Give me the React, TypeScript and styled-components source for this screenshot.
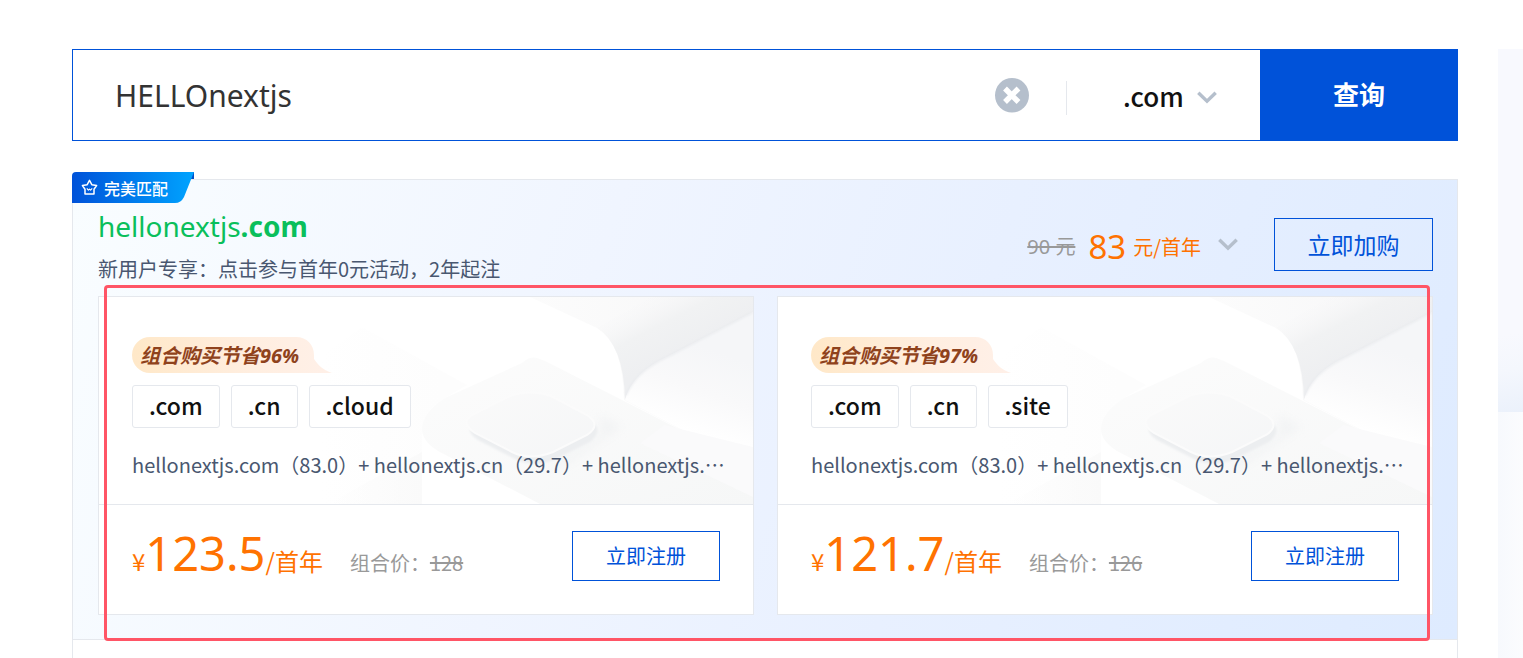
import React, { useState } from "react";
import styled, { createGlobalStyle } from "styled-components";

const latin = `"Noto Sans", "Noto Sans CJK SC", sans-serif`;
const cjk = `"Noto Sans CJK SC", "Noto Sans", sans-serif`;

const blue = "#0052d9";
const orange = "#ff7200";
const line = "#e5e8ed";

const GlobalStyle = createGlobalStyle`
  *, *::before, *::after { box-sizing: border-box; }
  body { margin: 0; background: #fff; color: #333; font-family: ${cjk}; overflow: hidden; }
  button, input, select { font: inherit; color: inherit; margin: 0; padding: 0; border: 0; background: none; border-radius: 0; outline: none; }
  button { cursor: pointer; }
`;

const Page = styled.div`
  display: flex;
  gap: 40px;
  padding: 49px 0 0 72px;
  height: 100vh;
`;

const Main = styled.main`
  flex: 1;
  min-width: 0;
  display: flex;
  flex-direction: column;
  gap: 38px;
`;

const Aside = styled.aside`
  flex: 0 0 25px;
  display: flex;
  flex-direction: column;
`;

const Promo = styled.div`
  flex: 0 0 363px;
  background: linear-gradient(170deg, #f8f9fe 0 78%, #f4f7fd 88%, #ebf1fb 100%);
`;

const SideList = styled.div`
  flex: 1;
  background: linear-gradient(90deg, #f7f9fd, #fbfcfe);
`;

const SearchForm = styled.form`
  display: flex;
  height: 92px;
`;

const SearchField = styled.div`
  flex: 1;
  display: flex;
  align-items: center;
  border: 1px solid ${blue};
  border-right: 0;
  padding-left: 42px;
`;

const SearchInput = styled.input`
  flex: 1;
  min-width: 0;
  height: 60px;
  font-family: ${latin};
  font-size: 30px;
`;

const ClearButton = styled.button`
  display: flex;
  width: 34px;
  height: 35px;
`;

const Suffix = styled.label`
  display: flex;
  align-items: center;
  gap: 14px;
  height: 34px;
  margin: 6px 0 0 37px;
  padding: 0 43px 2px 56px;
  border-left: 1px solid ${line};
`;

const SuffixSelect = styled.select`
  appearance: none;
  width: 60px;
  height: 40px;
  padding-bottom: 10px;
  color: #111;
  font-size: 26px;
  font-weight: 500;
`;

const SearchButton = styled.button`
  flex: 0 0 198px;
  padding-bottom: 4px;
  background: ${blue};
  color: #fff;
  font-size: 26px;
  font-weight: 700;
`;

const Result = styled.section`
  position: relative;
  flex: 1;
  border: 1px solid ${line};
  border-bottom: 0;
`;

const Ribbon = styled.div`
  position: absolute;
  z-index: 1;
  isolation: isolate;
  top: -8px;
  left: -1px;
  display: flex;
  align-items: center;
  gap: 6px;
  width: 122px;
  height: 31px;
  padding-left: 9px;
  color: #fff;
  font-size: 16px;
  font-weight: 500;
  line-height: 30px;
`;

const RibbonShape = styled.svg`
  position: absolute;
  inset: 0;
  z-index: -1;
`;

const Matched = styled.div`
  padding: 24px 24px 24px 25px;
  border-bottom: 1px solid ${line};
  background: linear-gradient(108deg, #f9fdff 0%, #f0f5ff 36%, #e8f0ff 62%, #deebff 100%);
`;

const MatchedHead = styled.div`
  display: flex;
  align-items: center;
  justify-content: space-between;
  height: 92px;
  padding-bottom: 4px;
`;

const Domain = styled.h1`
  margin: 0;
  color: #0abf5b;
  font-family: ${latin};
  font-size: 28px;
  font-weight: 400;
  line-height: 42px;

  b { font-weight: 700; }
`;

const Note = styled.p`
  margin: 0;
  color: #495770;
  font-size: 20px;
  line-height: 44px;
`;

const Actions = styled.div`
  display: flex;
  align-items: center;
  margin-top: -8px;
`;

const Price = styled.div`
  display: flex;
  align-items: center;
  gap: 7px;
  padding-top: 6px;
  color: ${orange};
  font-size: 20px;
  line-height: 46px;
`;

const OldPrice = styled.s`
  margin-right: 6px;
  color: #999;
  font-family: ${latin};
  font-size: 20px;
`;

const Amount = styled.strong<{ $size: number }>`
  font-family: ${latin};
  font-size: ${(p) => p.$size}px;
  font-weight: 400;
`;

const PlainButton = styled.button`
  display: flex;
  margin: 0 36px 0 17px;
`;

const OutlineButton = styled.button<{ $large?: boolean }>`
  width: ${(p) => (p.$large ? 159 : 148)}px;
  height: ${(p) => (p.$large ? 53 : 50)}px;
  border: 1px solid ${blue};
  color: ${blue};
  font-size: ${(p) => (p.$large ? 23 : 20)}px;
`;

const Bundles = styled.div`
  display: grid;
  grid-template-columns: 1fr 1fr;
  gap: 23px;
`;

const Bundle = styled.article`
  min-width: 0;
  border: 1px solid ${line};
  background: #fff;
`;

const BundleTop = styled.div`
  position: relative;
  isolation: isolate;
  height: 208px;
  padding: 40px 0 0 33px;
  border-bottom: 1px solid ${line};
`;

const Backdrop = styled.svg`
  position: absolute;
  z-index: -1;
  top: 0;
  right: 0;
`;

const Saving = styled.div`
  position: relative;
  isolation: isolate;
  width: 200px;
  height: 36px;
  padding-left: 8px;
  color: #8f421c;
  font-family: ${latin};
  font-size: 20px;
  font-style: italic;
  font-weight: 700;
  line-height: 38px;
  white-space: nowrap;

  svg { position: absolute; z-index: -1; inset: 0; }
`;

const Chips = styled.ul`
  display: flex;
  gap: 11px;
  margin: 12px 0 0;
  padding: 0;
  list-style: none;
`;

const Chip = styled.li`
  height: 43px;
  padding: 0 16px;
  border: 1px solid ${line};
  border-radius: 3px;
  background: #fff;
  color: #111;
  font-size: 23px;
  font-weight: 500;
  line-height: 38px;
`;

const Formula = styled.p`
  margin: 21px 0 0;
  color: #495770;
  font-size: 20px;
  line-height: 32px;
  white-space: nowrap;
`;

const BundleFoot = styled.div`
  display: flex;
  align-items: center;
  height: 109px;
  padding: 0 33px 8px;
`;

const BundlePrice = styled.div`
  flex: 1;
  display: flex;
  align-items: baseline;
  padding-top: 4px;
  color: ${orange};
  font-size: 24px;
  line-height: 60px;
`;

const Total = styled.span`
  margin-left: 27px;
  color: #999;
  font-size: 20px;
`;

const Highlight = styled.div`
  position: absolute;
  z-index: 2;
  top: 105px;
  left: 31px;
  right: 27px;
  height: 356px;
  border: 3px solid #ff5566;
  border-radius: 4px;
  pointer-events: none;
`;

const Chevron = () => (
  <svg width="20" height="13" viewBox="0 0 20 13" fill="none" stroke="#b5bfcc" strokeWidth="3.4" aria-hidden="true">
    <path d="M1.3 1.7 10 10.2 18.7 1.7" />
  </svg>
);

const Scene = ({ id }: { id: string }) => (
  <Backdrop width="433" height="207" viewBox="-80 0 433 207" aria-hidden="true">
    <defs>
      <linearGradient id={`${id}-top`} gradientUnits="userSpaceOnUse" x1="130" y1="0" x2="353" y2="0">
        <stop offset="0" stopColor="#fcfcfc" />
        <stop offset="1" stopColor="#f6f6f7" />
      </linearGradient>
      <linearGradient id={`${id}-band`} gradientUnits="userSpaceOnUse" x1="285" y1="52" x2="255" y2="-6">
        <stop offset="0" stopColor="#eeeff1" />
        <stop offset="0.5" stopColor="#f1f2f3" />
        <stop offset="1" stopColor="#f7f7f8" stopOpacity="0" />
      </linearGradient>
      <linearGradient id={`${id}-slope`} gradientUnits="userSpaceOnUse" x1="290" y1="45" x2="262" y2="125">
        <stop offset="0" stopColor="#f5f6f8" />
        <stop offset="0.5" stopColor="#f9f9fa" />
        <stop offset="1" stopColor="#ffffff" />
      </linearGradient>
      <linearGradient id={`${id}-deck`} x1="0" y1="0" x2="1" y2="1">
        <stop offset="0" stopColor="#fcfcfc" />
        <stop offset="1" stopColor="#f6f7f7" />
      </linearGradient>
      <linearGradient id={`${id}-pad`} x1="0" y1="0" x2="1" y2="1">
        <stop offset="0" stopColor="#fafafa" />
        <stop offset="1" stopColor="#f5f6f7" />
      </linearGradient>
      <linearGradient id={`${id}-floor`} gradientUnits="userSpaceOnUse" x1="-70" y1="0" x2="22" y2="0">
        <stop offset="0" stopColor="#fafafa" stopOpacity="0" />
        <stop offset="1" stopColor="#fafafa" />
      </linearGradient>
      <linearGradient id={`${id}-haze`} gradientUnits="userSpaceOnUse" x1="-80" y1="0" x2="40" y2="0">
        <stop offset="0" stopColor="#fdfdfd" stopOpacity="0" />
        <stop offset="1" stopColor="#fdfdfd" />
      </linearGradient>
      <filter id={`${id}-soft`} x="-20%" y="-20%" width="140%" height="140%">
        <feGaussianBlur stdDeviation="5" />
      </filter>
      <filter id={`${id}-edge`} x="-5%" y="-5%" width="110%" height="110%">
        <feGaussianBlur stdDeviation="1" />
      </filter>
    </defs>
    <path d="M-80 60-38 30 67 88 45 101Q22 116 22 132V207H-80Z" fill={`url(#${id}-haze)`} />
    <path d="M130 0 197 31Q223 46 224 103L353 170V0Z" fill={`url(#${id}-top)`} />
    <path d="M197 31 250 0H353V15L267 60Q233 75 225 103Q224 48 197 31Z" fill={`url(#${id}-band)`} />
    <path d="M353 15 267 60Q233 75 225 103L353 170Z" fill={`url(#${id}-slope)`} />
    <path d="M353 15 267 60Q236 74 226 98" fill="none" stroke="#e9ebee" strokeWidth="1.6" filter={`url(#${id}-edge)`} />
    <path d="M137 61Q130 59 122 66L45 101Q22 116 22 132Q22 144 38 154L140 207H353V170L224 104 145 64Z" fill={`url(#${id}-deck)`} />
    <path d="M353 150 264 128 240 146 353 200Z" fill="#fafafb" />
    <path d="M150 168 200 138V118L222 130 160 172Z" fill="#eceef0" opacity="0.5" filter={`url(#${id}-soft)`} />
    <path d="M72 118 110 99Q130 92 151 99L187 118Q202 128 187 140L153 157Q130 166 112 157L75 138Q60 128 72 118Z" fill="#eceef0" transform="translate(3 5)" filter={`url(#${id}-edge)`} />
    <path d="M72 118 110 99Q130 92 151 99L187 118Q202 128 187 138L153 155Q130 164 112 155L75 136Q60 126 72 118Z" fill={`url(#${id}-pad)`} stroke="#fbfbfb" strokeWidth="2" />
    <path d="M-72 207 22 155V207Z" fill={`url(#${id}-floor)`} />
  </Backdrop>
);

type BundleData = { id: string; saving: string; suffixes: string[]; formula: string; price: string; total: string };

const bundles: BundleData[] = [
  {
    id: "cloud",
    saving: "96%",
    suffixes: [".com", ".cn", ".cloud"],
    formula: "hellonextjs.com（83.0）+ hellonextjs.cn（29.7）+ hellonextjs.⋯",
    price: "123.5",
    total: "128",
  },
  {
    id: "site",
    saving: "97%",
    suffixes: [".com", ".cn", ".site"],
    formula: "hellonextjs.com（83.0）+ hellonextjs.cn（29.7）+ hellonextjs.⋯",
    price: "121.7",
    total: "126",
  },
];

const BundleCard = ({ data }: { data: BundleData }) => (
  <Bundle>
    <BundleTop>
      <Scene id={data.id} />
      <Saving>
        <svg width="200" height="36" viewBox="0 0 200 36" aria-hidden="true">
          <defs>
            <linearGradient id={`${data.id}-tag`}>
              <stop offset="0" stopColor="#ffe8c8" />
              <stop offset="0.6" stopColor="#ffeee0" />
              <stop offset="1" stopColor="#fff0e8" />
            </linearGradient>
          </defs>
          <path d="M18 0H164C175 0 182 8 182 18V22C187 29 191 33 200 36H18A18 18 0 0 1 18 0Z" fill={`url(#${data.id}-tag)`} />
        </svg>
        组合购买节省{data.saving}
      </Saving>
      <Chips>
        {data.suffixes.map((s) => (
          <Chip key={s}>{s}</Chip>
        ))}
      </Chips>
      <Formula>{data.formula}</Formula>
    </BundleTop>
    <BundleFoot>
      <BundlePrice>
        <span>¥</span>
        <Amount $size={47}>{data.price}</Amount>
        <span>/首年</span>
        <Total>
          组合价：<s>{data.total}</s>
        </Total>
      </BundlePrice>
      <OutlineButton type="button">立即注册</OutlineButton>
    </BundleFoot>
  </Bundle>
);

export default function App() {
  const [query, setQuery] = useState("HELLOnextjs");

  return (
    <>
      <GlobalStyle />
      <Page lang="zh-CN">
        <Main>
          <SearchForm onSubmit={(e) => e.preventDefault()}>
            <SearchField>
              <SearchInput aria-label="域名" spellCheck={false} value={query} onChange={(e) => setQuery(e.target.value)} />
              <ClearButton type="button" aria-label="清空" onClick={() => setQuery("")}>
                <svg width="34" height="35" viewBox="0 0 34 35" aria-hidden="true">
                  <ellipse cx="17" cy="17.3" rx="17" ry="17.3" fill="#b5bfcc" />
                  <path d="M10 10.5 23.5 24M23.5 10.5 10 24" stroke="#fff" strokeWidth="5.4" />
                </svg>
              </ClearButton>
              <Suffix>
                <SuffixSelect aria-label="后缀" defaultValue=".com">
                  <option>.com</option>
                  <option>.cn</option>
                </SuffixSelect>
                <Chevron />
              </Suffix>
            </SearchField>
            <SearchButton type="submit">查询</SearchButton>
          </SearchForm>

          <Result>
            <Ribbon>
              <RibbonShape width="122" height="31" viewBox="0 0 122 31" aria-hidden="true">
                <defs>
                  <linearGradient id="ribbon">
                    <stop offset="0" stopColor="#0052d9" />
                    <stop offset="1" stopColor="#00a4ff" />
                  </linearGradient>
                </defs>
                <path d="M115 0H122V7H115Z" fill="#0050c8" />
                <path d="M4 0H122L112 25Q109 31 103 31H0V4Q0 0 4 0Z" fill="url(#ribbon)" />
              </RibbonShape>
              <svg width="17" height="17" viewBox="0 0 17 17" fill="none" stroke="#fff" strokeWidth="1.5" strokeLinejoin="round" aria-hidden="true">
                <path d="M8.5 1.4 10.8 5.7 15.6 6.6 13 10.2V15H4V10.2L1.4 6.6 6.2 5.7Z" />
                <path d="M5.8 9.4 7.4 11.2 8.5 10.2 9.6 11.2 11.2 9.4" strokeWidth="1.1" />
              </svg>
              完美匹配
            </Ribbon>

            <Matched>
              <MatchedHead>
                <div>
                  <Domain>
                    hellonextjs<b>.com</b>
                  </Domain>
                  <Note>新用户专享：点击参与首年0元活动，2年起注</Note>
                </div>
                <Actions>
                  <Price>
                    <OldPrice>90 元</OldPrice>
                    <Amount $size={33}>83</Amount>
                    <span>元/首年</span>
                  </Price>
                  <PlainButton type="button" aria-label="更多价格">
                    <Chevron />
                  </PlainButton>
                  <OutlineButton type="button" $large>
                    立即加购
                  </OutlineButton>
                </Actions>
              </MatchedHead>
              <Bundles>
                {bundles.map((b) => (
                  <BundleCard key={b.id} data={b} />
                ))}
              </Bundles>
            </Matched>
            <Highlight />
          </Result>
        </Main>
        <Aside>
          <Promo />
          <SideList />
        </Aside>
      </Page>
    </>
  );
}
